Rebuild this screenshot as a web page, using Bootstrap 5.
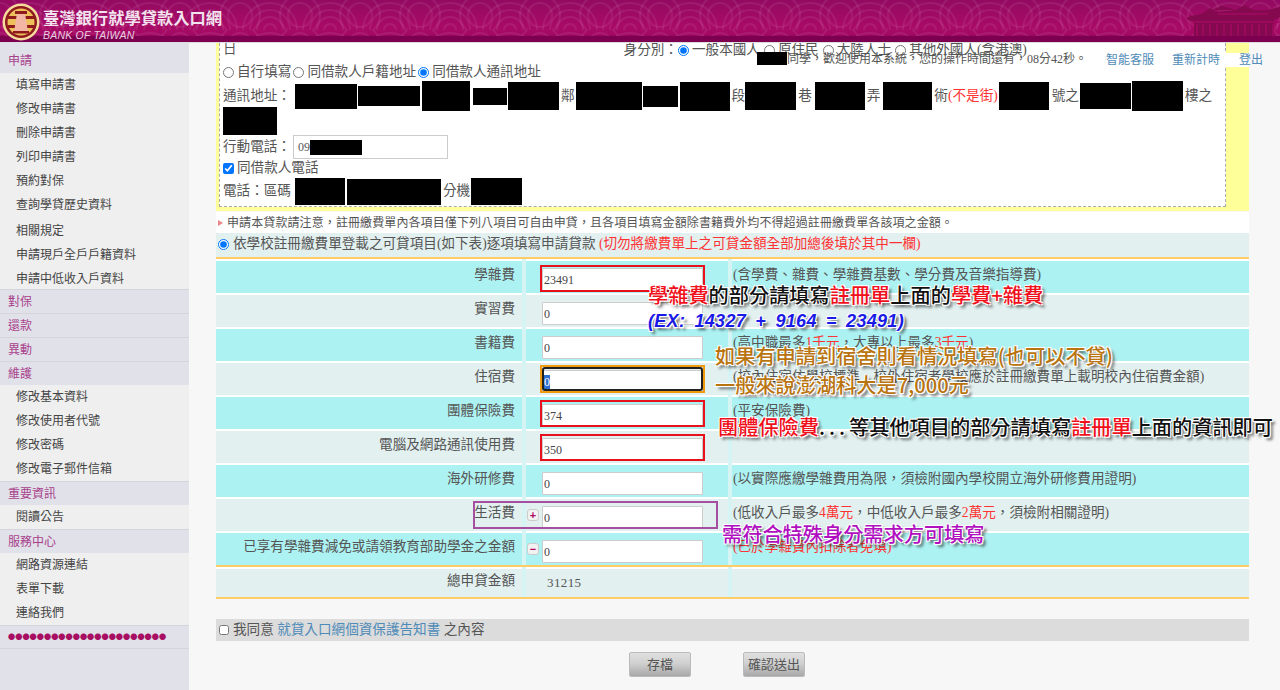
<!DOCTYPE html>
<html lang="zh-TW">
<head>
<meta charset="UTF-8">
<title>臺灣銀行就學貸款入口網</title>
<link href="https://cdn.jsdelivr.net/npm/bootstrap@5.3.3/dist/css/bootstrap.min.css" rel="stylesheet">
<style>
html, body { height: 690px; overflow: hidden; }
body { font-family: "Liberation Serif", "Noto Sans CJK TC", serif; font-size: 13.6px; color: #555; background: #f7f7f7; }
.page-wrap { position: relative; width: 1280px; height: 690px; overflow: hidden; }

/* header */
.top-bar { position: relative; z-index: 5; height: 43px; background: linear-gradient(#930a62, #a80a66 60%, #a30a63 82%, #7d0050 84%, #7d0050 97%, #ddd 97%); overflow: hidden; }
.top-bar svg.top-art { position: absolute; left: 0; top: 0; }
.top-logo { position: absolute; left: 2px; top: 3px; }
.top-title { position: absolute; left: 43px; top: 6px; font: 700 16.3px/22px "Noto Sans CJK TC", serif; color: #f3e3ee; white-space: nowrap; }
.top-sub { position: absolute; left: 43px; top: 29px; font: italic 10.5px/12px "Liberation Sans", sans-serif; color: #e9cfe0; letter-spacing: .2px; }

/* sidebar */
.side-menu { width: 189px; flex: none; height: 647px; background: #e1e1ea; font-family: "Noto Sans CJK TC", sans-serif; font-size: 12px; }
.side-head { height: 24px; line-height: 24px; padding-left: 8px; color: #a8418a; background: #e1e1ea; box-shadow: inset 0 1px 0 #d4d4da; }
.side-head.first { height: 30px; line-height: 33px; box-shadow: none; }
.side-item { height: 24px; line-height: 22px; padding-left: 16px; color: #444; background: #efefef; }
.side-item.nudge { line-height: 25px; }
.side-dots { height: 24px; line-height: 23px; padding-left: 8px; color: #a80f62; font-size: 7.2px; white-space: nowrap; box-shadow: inset 0 1px 0 #d4d4da, inset 0 -1px 0 #d4d4da; }

/* main */
.main-pane { width: 1060px; padding-left: 27px; }
.main-inner { width: 1033px; }
.yellow-box { height: 168px; background: #ffff99; padding: 0 23px 4px 3px; }
.white-box { height: 164px; background: #fff; border: 1px dashed #aaa; border-top: 0; padding-left: 3px; overflow: hidden; }
.form-line { display: flex; align-items: center; white-space: nowrap; }
.black-out { display: inline-block; background: #000; flex: none; }
.plain-radio { margin: 0 3px 0 0; width: 11px; height: 11px; }
.plain-radio.tight { margin-left: 2px; }
.plain-text { height: 24px; width: 155px; border: 1px solid #ccc; padding: 0 4px; font: 12px "Liberation Serif", serif; color: #555; display: flex; align-items: center; background: #fff; }
.red-text { color: #f33; }
.note-line { height: 21px; line-height: 23px; background: #fff; font-size: 12px; letter-spacing: .1px; padding-left: 2px; margin-top: 1px; }
.note-line i { display: inline-block; width: 0; height: 0; border: 3px solid transparent; border-left: 5px solid #e88; border-right: 0; margin-right: 4px; vertical-align: 1px; }
.radio-line { height: 24px; background: #e2f0f0; padding: 0 0 2px 2px; }
.radio-line .plain-radio { margin-right: 4px; }
.orange-line { height: 2px; background: #ffcc66; position: relative; }

.fee-row { display: grid; grid-template-columns: 306px 202px 1fr; column-gap: 4px; height: 34px; background: #d6f4f4; }
.fee-row.last-row { height: 30px; }
.fee-cell { display: flex; align-items: center; border-top: 2px solid #fff; }
.fee-row.cyan .fee-cell { background: #adf2f2; }
.fee-row.pale .fee-cell { background: #e2f0f0; }
.fee-name { justify-content: flex-end; padding: 0 7px 4px 0; }
.fee-input { padding: 4px 0 0 1px; }
.fee-help { padding: 0 0 4px 1px; white-space: nowrap; }
.fee-box { width: 161px; height: 23px; margin-left: 15px; border: 1px solid #ccc; border-radius: 1px; padding: 2px 1px 0; font: 12px "Liberation Serif", serif; color: #444; background: #fff; outline: 0; }
.fee-box.has-btn { margin-left: 3px; }
.fee-box::selection { background: #2f6fd0; color: #fff; }
.mini-btn { width: 12px; height: 12px; border: 1px solid #ccc; border-radius: 3px; background: #f2f2f2; color: #b00a66; display: flex; align-items: center; justify-content: center; font: 700 11px/1 "Liberation Sans", sans-serif; padding: 0; margin-top: -4px; }
.fee-total { margin: -4px 0 0 20px; font-size: 13px; letter-spacing: .4px; }
.red-frame { border: 2px solid #e8101a; position: absolute; width: 165px; height: 27px; left: 540px; z-index: 2; pointer-events: none; }
.orange-frame { border: 2px solid #f19a0e; position: absolute; width: 165px; height: 28px; left: 540px; top: 365px; z-index: 2; pointer-events: none; }
.black-frame { border: 2px solid #222; border-radius: 3px; position: absolute; width: 161px; height: 24px; left: 542px; top: 367px; z-index: 2; pointer-events: none; }
.purple-frame { border: 2px solid #a64fa0; position: absolute; left: 473px; top: 501px; width: 245px; height: 28px; z-index: 2; pointer-events: none; }

.agree-bar { height: 22px; background: #dcdcdc; margin-top: 20px; padding-left: 3px; }
.agree-bar input { margin: 0 4px 0 0; width: 10px; height: 10px; }
.blue-link { color: #4f8bb8; text-decoration: none; }
.grey-btn { width: 62px; height: 25px; padding: 0; border: 1px solid #bbb; border-radius: 2px; font-size: 13px; line-height: 23px; color: #555; background: linear-gradient(#e0e0e0, #d0d0d0 45%, #a8a8a8); }

/* status bar over the form */
.status-bar { position: absolute; z-index: 4; top: 52px; left: 757px; width: 492px; height: 15px; font-size: 12px; line-height: 15px; white-space: nowrap; }
.status-links { position: absolute; left: 349px; right: 0; top: 1px; height: 14px; background: #fff; }
.status-links a { position: absolute; top: 0; }

/* hand-written notes on the screenshot */
.paint-note { position: absolute; z-index: 6; white-space: nowrap; font: 500 20.2px/24px "Noto Sans CJK TC", sans-serif; text-shadow: 1px 1px 0 #fff, -1px -1px 0 #fff, 1px -1px 0 #fff, -1px 1px 0 #fff, 3px 3px 3px rgba(0,0,0,.65); }
.note-ex { font: italic 700 18px/24px "Liberation Sans", sans-serif; word-spacing: 4px; letter-spacing: .3px; }
.note-dots { letter-spacing: 4px; }
.tx-red { color: #f0101c; }
.tx-black { color: #111; }
.tx-blue { color: #1a1ae6; }
.tx-gold { color: #b97410; }
.tx-purple { color: #b010c0; }
</style>
</head>
<body>
<div class="page-wrap">

<div class="top-bar">
    <svg class="top-art" width="1280" height="36" viewBox="0 0 1280 36">
        <defs>
            <pattern id="waves" width="60" height="30" patternUnits="userSpaceOnUse">
                <g fill="none" stroke="#fff" stroke-opacity=".07" stroke-width="2">
                    <circle cx="30" cy="30" r="27"/><circle cx="30" cy="30" r="20"/><circle cx="30" cy="30" r="13"/><circle cx="30" cy="30" r="6"/>
                    <circle cx="0" cy="15" r="20"/><circle cx="60" cy="15" r="20"/><circle cx="0" cy="15" r="12"/><circle cx="60" cy="15" r="12"/>
                </g>
            </pattern>
        </defs>
        <rect width="1280" height="36" fill="url(#waves)"/>
        <g fill="#85094f">
            <path d="M1190 16l12-2 8-6 6 4 20-2 8-5 10 5h14l12-3v10l-6 3v16h-80v-14l-8-3z"/>
            <path d="M1222 6l14 4h-24z"/>
        </g>
        <g stroke="#a30a63" stroke-width="1.4">
            <path d="M1197 24v12M1203 24v12M1210 24v12M1217 24v12M1224 24v12M1231 24v12M1238 24v12M1245 24v12M1252 24v12M1259 24v12M1266 24v12M1273 24v12"/>
            <path d="M1192 22h88M1218 14h50"/>
        </g>
    </svg>
    <svg class="top-logo" width="38" height="38" viewBox="0 0 38 38">
        <circle cx="19" cy="19" r="18.5" fill="#f6dc9c"/>
        <circle cx="19" cy="19" r="16" fill="#8e1a1e"/>
        <circle cx="19" cy="19" r="13.5" fill="#eec05a"/>
        <path d="M6 13h26v3H6zM6 22h26v3H6z" fill="#8e1a1e"/>
        <path d="M15 10h8l3 19H12z" fill="#f4b6a4"/>
        <path d="M13 8h12v3H13z" fill="#8e1a1e"/>
        <path d="M11 28h16v2.500H11z" fill="#8e1a1e"/>
    </svg>
    <div class="top-title">臺灣銀行就學貸款入口網</div>
    <div class="top-sub">BANK OF TAIWAN</div>
</div>

<div class="d-flex">
    <div class="side-menu">
        <div class="side-head first">申請</div>
        <div class="side-item">填寫申請書</div>
        <div class="side-item">修改申請書</div>
        <div class="side-item">刪除申請書</div>
        <div class="side-item">列印申請書</div>
        <div class="side-item">預約對保</div>
        <div class="side-item">查詢學貸歷史資料</div>
        <div class="side-item nudge">相關規定</div>
        <div class="side-item nudge">申請現戶全戶戶籍資料</div>
        <div class="side-item nudge">申請中低收入戶資料</div>
        <div class="side-head">對保</div>
        <div class="side-head">還款</div>
        <div class="side-head">異動</div>
        <div class="side-head">維護</div>
        <div class="side-item">修改基本資料</div>
        <div class="side-item">修改使用者代號</div>
        <div class="side-item">修改密碼</div>
        <div class="side-item">修改電子郵件信箱</div>
        <div class="side-head">重要資訊</div>
        <div class="side-item">閱讀公告</div>
        <div class="side-head">服務中心</div>
        <div class="side-item">網路資源連結</div>
        <div class="side-item">表單下載</div>
        <div class="side-item">連絡我們</div>
        <div class="side-dots">●●●●●●●●●●●●●●●●●●●●●●</div>
    </div>

    <div class="main-pane">
        <div class="main-inner">
            <div class="yellow-box">
                <div class="white-box">
                    <div class="form-line" style="height:19px">
                        <span style="margin-top:-7px">日</span>
                        <span class="d-flex align-items-center" style="margin:-4px 0 0 387px">身分別：
                            <input class="plain-radio" type="radio" name="sf" checked>一般本國人
                            <input class="plain-radio ms-1" type="radio" name="sf">原住民
                            <input class="plain-radio ms-1" type="radio" name="sf">大陸人士
                            <input class="plain-radio ms-1" type="radio" name="sf">其他外國人(含港澳)
                        </span>
                    </div>
                    <div class="form-line" style="height:20px">
                        <input class="plain-radio" type="radio" name="dz">自行填寫
                        <input class="plain-radio tight" type="radio" name="dz">同借款人戶籍地址
                        <input class="plain-radio tight" type="radio" name="dz" checked>同借款人通訊地址
                    </div>
                    <div class="form-line" style="height:28px">
                        通訊地址：
                        <span class="black-out" style="width:62px;height:25px;margin-left:4px"></span>
                        <span class="black-out" style="width:62px;height:20px;margin-left:1px"></span>
                        <span class="black-out" style="width:48px;height:30px;margin-left:2px"></span>
                        <span class="black-out" style="width:34px;height:17px;margin-left:3px"></span>
                        <span class="black-out" style="width:51px;height:28px;margin-left:1px"></span>
                        <span style="margin-left:2px">鄰</span>
                        <span class="black-out" style="width:66px;height:28px;margin-left:1px"></span>
                        <span class="black-out" style="width:35px;height:21px;margin-left:1px"></span>
                        <span class="black-out" style="width:50px;height:29px;margin-left:2px"></span>
                        <span style="margin-left:2px">段</span>
                        <span class="black-out" style="width:51px;height:28px"></span>
                        <span style="margin-left:2px">巷</span>
                        <span class="black-out" style="width:50px;height:28px;margin-left:3px"></span>
                        <span style="margin-left:2px">弄</span>
                        <span class="black-out" style="width:49px;height:28px;margin-left:3px"></span>
                        <span style="margin-left:2px">術<span class="red-text">(不是街)</span></span>
                        <span class="black-out" style="width:50px;height:28px;margin-left:1px"></span>
                        <span style="margin-left:3px">號之</span>
                        <span class="black-out" style="width:51px;height:26px;margin-left:1px"></span>
                        <span class="black-out" style="width:51px;height:30px;margin-left:1px"></span>
                        <span style="margin-left:2px">樓之</span>
                    </div>
                    <div class="form-line" style="height:25px">
                        <span class="black-out" style="width:54px;height:28px;margin-top:-4px"></span>
                    </div>
                    <div class="form-line" style="height:24px">
                        行動電話：
                        <span class="plain-text" style="margin-left:2px">09<span class="black-out" style="width:52px;height:15px"></span></span>
                    </div>
                    <div class="form-line" style="height:19px;padding-bottom:1px">
                        <input class="plain-radio" type="checkbox" checked>同借款人電話
                    </div>
                    <div class="form-line" style="height:27px">
                        電話：區碼
                        <span class="black-out" style="width:50px;height:27px;margin-left:4px"></span>
                        <span class="black-out" style="width:94px;height:26px;margin-left:2px"></span>
                        <span style="margin-left:2px">分機</span>
                        <span class="black-out" style="width:51px;height:27px;margin-left:1px"></span>
                    </div>
                </div>
            </div>

            <div class="note-line"><i></i>申請本貸款請注意，註冊繳費單內各項目僅下列八項目可自由申貸，且各項目填寫金額除書籍費外均不得超過註冊繳費單各該項之金額。</div>
            <div class="radio-line d-flex align-items-center">
                <input class="plain-radio" type="radio" checked>依學校註冊繳費單登載之可貸項目(如下表)逐項填寫申請貸款&nbsp;<span class="red-text">(切勿將繳費單上之可貸金額全部加總後填於其中一欄)</span>
            </div>
            <div class="orange-line"></div>

            <div class="fee-row cyan">
                <div class="fee-cell fee-name">學雜費</div>
                <div class="fee-cell fee-input"><input class="fee-box" value="23491"></div>
                <div class="fee-cell fee-help">(含學費、雜費、學雜費基數、學分費及音樂指導費)</div>
            </div>
            <div class="fee-row pale">
                <div class="fee-cell fee-name">實習費</div>
                <div class="fee-cell fee-input"><input class="fee-box" value="0"></div>
                <div class="fee-cell fee-help"></div>
            </div>
            <div class="fee-row cyan">
                <div class="fee-cell fee-name">書籍費</div>
                <div class="fee-cell fee-input"><input class="fee-box" value="0"></div>
                <div class="fee-cell fee-help">(高中職最多<span class="red-text">1千元</span>，大專以上最多<span class="red-text">3千元</span>)</div>
            </div>
            <div class="fee-row pale">
                <div class="fee-cell fee-name">住宿費</div>
                <div class="fee-cell fee-input"><input class="fee-box" id="zhusu" value="0"></div>
                <div class="fee-cell fee-help">(校內住宿依學校標準，校外住宿者學校應於註冊繳費單上載明校內住宿費金額)</div>
            </div>
            <div class="fee-row cyan">
                <div class="fee-cell fee-name">團體保險費</div>
                <div class="fee-cell fee-input"><input class="fee-box" value="374"></div>
                <div class="fee-cell fee-help">(平安保險費)</div>
            </div>
            <div class="fee-row pale">
                <div class="fee-cell fee-name">電腦及網路通訊使用費</div>
                <div class="fee-cell fee-input"><input class="fee-box" value="350"></div>
                <div class="fee-cell fee-help"></div>
            </div>
            <div class="fee-row cyan">
                <div class="fee-cell fee-name">海外研修費</div>
                <div class="fee-cell fee-input"><input class="fee-box" value="0"></div>
                <div class="fee-cell fee-help">(以實際應繳學雜費用為限，須檢附國內學校開立海外研修費用證明)</div>
            </div>
            <div class="fee-row pale">
                <div class="fee-cell fee-name">生活費</div>
                <div class="fee-cell fee-input"><button class="mini-btn" type="button">+</button><input class="fee-box has-btn" value="0"></div>
                <div class="fee-cell fee-help">(低收入戶最多<span class="red-text">4萬元</span>，中低收入戶最多<span class="red-text">2萬元</span>，須檢附相關證明)</div>
            </div>
            <div class="fee-row cyan">
                <div class="fee-cell fee-name">已享有學雜費減免或請領教育部助學金之金額</div>
                <div class="fee-cell fee-input"><button class="mini-btn" type="button">−</button><input class="fee-box has-btn" value="0"></div>
                <div class="fee-cell fee-help red-text">(已於學雜費內扣除者免填)</div>
            </div>
            <div class="orange-line"></div>
            <div class="fee-row pale last-row">
                <div class="fee-cell fee-name">總申貸金額</div>
                <div class="fee-cell fee-input"><span class="fee-total">31215</span></div>
                <div class="fee-cell fee-help"></div>
            </div>
            <div class="orange-line"></div>

            <div class="agree-bar d-flex align-items-center">
                <input type="checkbox">我同意&nbsp;<a class="blue-link" href="#">就貸入口網個資保護告知書</a>&nbsp;之內容
            </div>
            <div class="d-flex" style="padding:11px 0 0 413px;gap:52px">
                <button class="grey-btn" type="button">存檔</button>
                <button class="grey-btn" type="button">確認送出</button>
            </div>
        </div>
    </div>
</div>

<div class="status-bar">
    <span class="black-out" style="width:30px;height:13px;vertical-align:-2px"></span>同學，歡迎使用本系統，您的操作時間還有，08分42秒。
    <div class="status-links">
        <a class="blue-link" style="left:0">智能客服</a>
        <a class="blue-link" style="left:66px">重新計時</a>
        <a class="blue-link" style="left:133px">登出</a>
    </div>
</div>

<div class="red-frame" style="top:265px"></div>
<div class="red-frame" style="top:400px"></div>
<div class="red-frame" style="top:434px"></div>
<div class="orange-frame"></div>
<div class="black-frame"></div>
<div class="purple-frame"></div>

<div class="paint-note" style="left:648px;top:283px"><span class="tx-red">學雜費</span><span class="tx-black">的部分請填寫</span><span class="tx-red">註冊單</span><span class="tx-black">上面的</span><span class="tx-red">學費+雜費</span></div>
<div class="paint-note note-ex tx-blue" style="left:648px;top:309px">(EX: 14327 + 9164 = 23491)</div>
<div class="paint-note tx-gold" style="left:715px;top:344px">如果有申請到宿舍則看情況填寫(也可以不貸)</div>
<div class="paint-note tx-gold" style="left:715px;top:373px">一般來說澎湖科大是7,000元</div>
<div class="paint-note" style="left:718px;top:415px"><span class="tx-red">團體保險費</span><span class="tx-black note-dots">...</span><span class="tx-black">等其他項目的部分請填寫</span><span class="tx-red">註冊單</span><span class="tx-black">上面的資訊即可</span></div>
<div class="paint-note tx-purple" style="left:722px;top:522px">需符合特殊身分需求方可填寫</div>

</div>
<script src="https://cdn.jsdelivr.net/npm/bootstrap@5.3.3/dist/js/bootstrap.bundle.min.js"></script>
<script>
    // 住宿費欄位預設選取
    const zhusu = document.getElementById('zhusu');
    zhusu.focus();
    zhusu.select();
</script>
</body>
</html>
